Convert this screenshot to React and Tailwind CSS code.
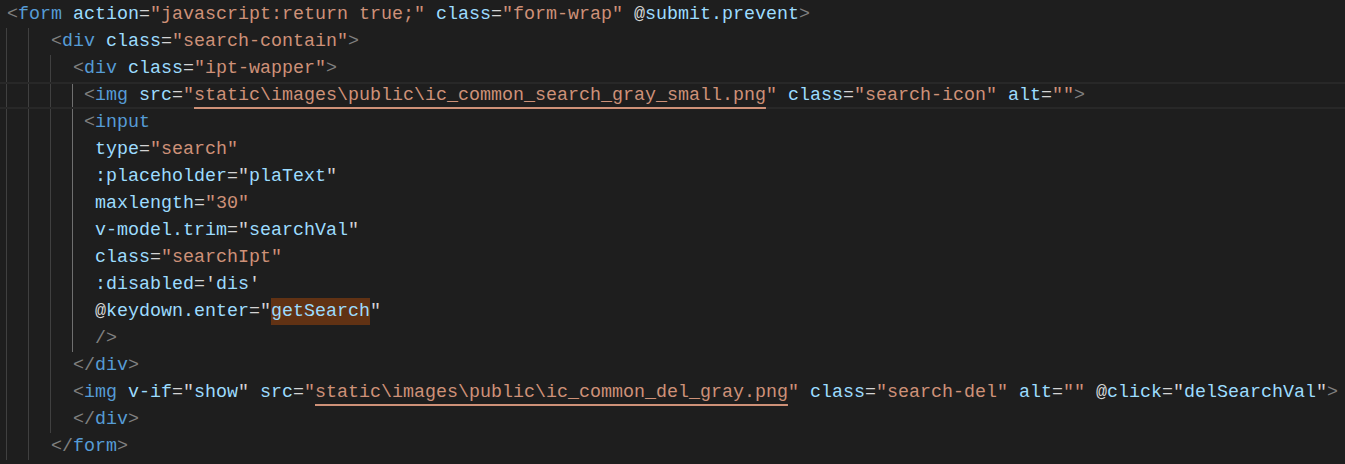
import React from 'react';

const B = 'text-[#808080]';
const T = 'text-[#569cd6]';
const A = 'text-[#9cdcfe]';
const E = 'text-[#d4d4d4]';
const S = 'text-[#ce9178]';

// token kinds: plain colour, 'u' = link underline, 'h' = find match
const lines = [
  {
    indent: 0, guides: [],
    tokens: [['<', B], ['form', T], [' '], ['action', A], ['=', E], ['"javascript:return true;"', S], [' '], ['class', A], ['=', E], ['"form-wrap"', S], [' '], ['@', E], ['submit.prevent', A], ['>', B]],
  },
  {
    indent: 4, guides: [0, 2],
    tokens: [['<', B], ['div', T], [' '], ['class', A], ['=', E], ['"search-contain"', S], ['>', B]],
  },
  {
    indent: 6, guides: [0, 2, 4],
    tokens: [['<', B], ['div', T], [' '], ['class', A], ['=', E], ['"ipt-wapper"', S], ['>', B]],
  },
  {
    indent: 7, guides: [0, 2, 4, 6], current: true,
    tokens: [['<', B], ['img', T], [' '], ['src', A], ['=', E], ['"', S], ['static\\images\\public\\ic_common_search_gray_small.png', S, 'u'], ['"', S], [' '], ['class', A], ['=', E], ['"search-icon"', S], [' '], ['alt', A], ['=', E], ['""', S], ['>', B]],
  },
  {
    indent: 7, guides: [0, 2, 4, 6],
    tokens: [['<', B], ['input', T]],
  },
  {
    indent: 8, guides: [0, 2, 4, 6],
    tokens: [['type', A], ['=', E], ['"search"', S]],
  },
  {
    indent: 8, guides: [0, 2, 4, 6],
    tokens: [[':placeholder', A], ['=', E], ['"', E], ['plaText', A], ['"', E]],
  },
  {
    indent: 8, guides: [0, 2, 4, 6],
    tokens: [['maxlength', A], ['=', E], ['"30"', S]],
  },
  {
    indent: 8, guides: [0, 2, 4, 6],
    tokens: [['v-model.trim', A], ['=', E], ['"', E], ['searchVal', A], ['"', E]],
  },
  {
    indent: 8, guides: [0, 2, 4, 6],
    tokens: [['class', A], ['=', E], ['"searchIpt"', S]],
  },
  {
    indent: 8, guides: [0, 2, 4, 6],
    tokens: [[':disabled', A], ['=', E], ["'", E], ['dis', A], ["'", E]],
  },
  {
    indent: 8, guides: [0, 2, 4, 6],
    tokens: [['@', E], ['keydown.enter', A], ['=', E], ['"', E], ['getSearch', A, 'h'], ['"', E]],
  },
  {
    indent: 8, guides: [0, 2, 4, 6],
    tokens: [['/>', B]],
  },
  {
    indent: 6, guides: [0, 2, 4],
    tokens: [['</', B], ['div', T], ['>', B]],
  },
  {
    indent: 6, guides: [0, 2, 4],
    tokens: [['<', B], ['img', T], [' '], ['v-if', A], ['=', E], ['"', E], ['show', A], ['"', E], [' '], ['src', A], ['=', E], ['"', S], ['static\\images\\public\\ic_common_del_gray.png', S, 'u'], ['"', S], [' '], ['class', A], ['=', E], ['"search-del"', S], [' '], ['alt', A], ['=', E], ['""', S], [' '], ['@', E], ['click', A], ['=', E], ['"', E], ['delSearchVal', A], ['"', E], ['>', B]],
  },
  {
    indent: 6, guides: [0, 2, 4],
    tokens: [['</', B], ['div', T], ['>', B]],
  },
  {
    indent: 4, guides: [0, 2],
    tokens: [['</', B], ['form', T], ['>', B]],
  },
];

const Indent = ({ indent, guides }) => {
  const parts = [];
  let col = 0;
  guides.forEach((g, i) => {
    const end = i + 1 < guides.length ? guides[i + 1] : indent;
    const active = g === 6;
    parts.push(
      <span
        key={g}
        className={`inline-block h-full shrink-0 border-l ${active ? 'border-[#6f6f6f]' : 'border-[#404040]'} ${end - g === 1 ? 'w-[11px]' : 'w-[22px]'}`}
      />
    );
    col = end;
  });
  if (col < indent) {
    parts.push(<span key="rest" className={indent - col === 1 ? 'inline-block w-[11px]' : 'inline-block w-[22px]'} />);
  }
  return parts;
};

const Token = ({ text, color, kind }) => {
  if (kind === 'u') {
    return <span className={`${color} underline decoration-[#ce9178] decoration-2 underline-offset-[7px]`}>{text}</span>;
  }
  if (kind === 'h') {
    return <span className={`${color} inline-block bg-[#613214]`}>{text}</span>;
  }
  return <span className={color || E}>{text}</span>;
};

export default function App() {
  return (
    <div className="w-[1345px] h-[464px] overflow-hidden bg-[#1e1e1e] pt-[1px] font-['Liberation_Mono',monospace] text-[18.33px]">
      {lines.map((line, i) => (
        <div
          key={i}
          className={`flex h-[27px] whitespace-pre pl-[6px] ${line.current ? 'border-y-2 border-[#282828] leading-[23px]' : 'leading-[27px]'}`}
        >
          <Indent indent={line.indent} guides={line.guides} />
          <span className="pl-px">
            {line.tokens.map(([text, color, kind], j) => (
              <Token key={j} text={text} color={color} kind={kind} />
            ))}
          </span>
        </div>
      ))}
    </div>
  );
}
